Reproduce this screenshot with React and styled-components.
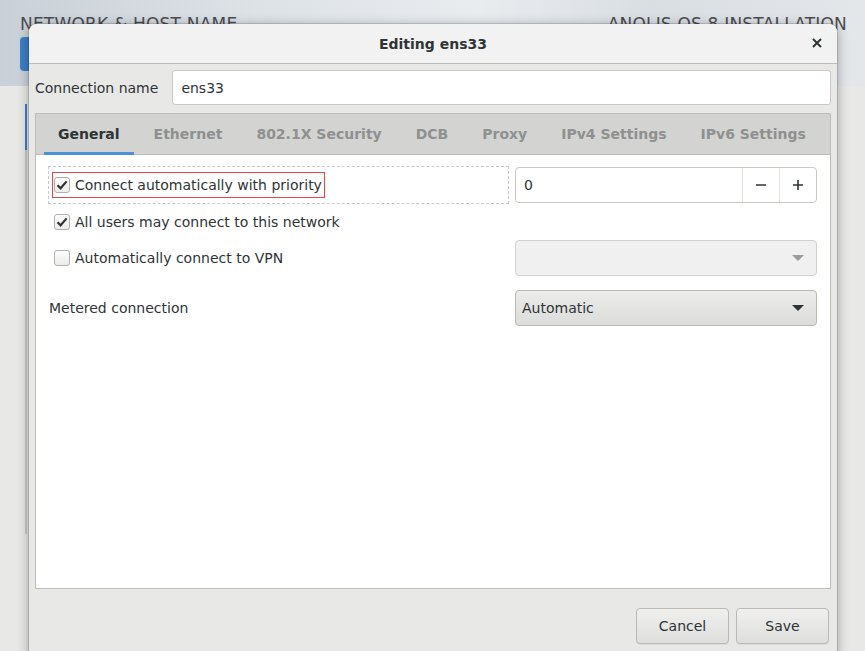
import React from 'react'
import styled, { createGlobalStyle } from 'styled-components'

const GlobalStyle = createGlobalStyle`
  html, body {
    margin: 0;
    padding: 0;
    width: 865px;
    height: 651px;
    overflow: hidden;
    background: #e8e8e7;
    font-family: 'DejaVu Sans', 'Noto Sans', sans-serif;
  }
`

const Screen = styled.div`
  position: relative;
  width: 865px;
  height: 651px;
  overflow: hidden;
  background: #e8e8e7;
`

const Banner = styled.header`
  height: 86px;
  background: linear-gradient(90deg, #c9d0d7 0%, #dde2e7 30%, #e8ecef 55%, #d9dee3 75%, #e3e7ea 100%);
  display: flex;
  justify-content: space-between;
  padding: 14px 18px 0 20px;
  box-sizing: border-box;
  color: #4a4d50;
  font-size: 17px;
  letter-spacing: 0.2px;
`

const BannerText = styled.span`
  line-height: 20px;
`

const BlueButton = styled.div`
  position: absolute;
  left: 20px;
  top: 37px;
  width: 60px;
  height: 34px;
  border-radius: 4px;
  background: #3c80c9;
`

const SideRail = styled.div`
  position: absolute;
  left: 25px;
  top: 104px;
  width: 4px;
  height: 430px;
  border-left: 2px solid #c8c8c6;
  &::before {
    content: '';
    display: block;
    width: 2px;
    height: 46px;
    margin-left: -2px;
    background: #3c80c9;
  }
`

const Dialog = styled.section`
  position: absolute;
  left: 29px;
  top: 24px;
  width: 808px;
  height: 640px;
  background: #e8e8e7;
  border-radius: 8px 8px 0 0;
  box-shadow: 0 2px 12px rgba(0, 0, 0, 0.35), 0 0 0 1px rgba(0, 0, 0, 0.12);
  display: flex;
  flex-direction: column;
  overflow: hidden;
`

const TitleBar = styled.div`
  height: 39px;
  flex: none;
  display: flex;
  align-items: center;
  justify-content: center;
  position: relative;
  background: #f2f2f2;
  border-bottom: 1px solid #bdbdbb;
  font-weight: bold;
  font-size: 14px;
  color: #2e3436;
`

const CloseButton = styled.span`
  position: absolute;
  right: 12px;
  top: 11px;
  width: 16px;
  height: 16px;
  display: flex;
  align-items: center;
  justify-content: center;
`

const Body = styled.div`
  flex: 1;
  display: flex;
  flex-direction: column;
  padding: 6px 6px 0 6px;
  gap: 8px;
`

const NameRow = styled.div`
  display: flex;
  align-items: center;
  gap: 14px;
  height: 35px;
`

const Label = styled.span`
  font-size: 14px;
  color: #2e3436;
  white-space: nowrap;
`

const Entry = styled.div`
  flex: 1;
  height: 100%;
  box-sizing: border-box;
  background: #fff;
  border: 1px solid #cdc7c2;
  border-radius: 3px;
  display: flex;
  align-items: center;
  padding-left: 8px;
  font-size: 14px;
  color: #2e3436;
`

const Notebook = styled.div`
  height: 476px;
  box-sizing: border-box;
  border: 1px solid #c0bdb9;
  display: flex;
  flex-direction: column;
  background: #fff;
`

const TabBar = styled.div`
  height: 40px;
  flex: none;
  display: flex;
  align-items: stretch;
  padding-left: 5px;
  background: #d3d3d2;
  border-bottom: 1px solid #c0bdb9;
`

const Tab = styled.div`
  position: relative;
  display: flex;
  align-items: center;
  padding: 0 17px;
  font-weight: bold;
  font-size: 14px;
  color: ${(p) => (p.$active ? '#2e3436' : '#8f9090')};
  &::after {
    content: '';
    display: ${(p) => (p.$active ? 'block' : 'none')};
    position: absolute;
    left: 3px;
    right: 3px;
    bottom: -1px;
    height: 3px;
    background: #4a90d9;
  }
`

const Page = styled.div`
  display: grid;
  grid-template-columns: 461px 302px;
  grid-template-rows: 38px 36px 36px 50px;
  column-gap: 6px;
  padding: 11px 12px 0 12px;
  & > :nth-child(n + 7) {
    align-self: end;
    height: 36px;
  }
`

const CheckRow = styled.div`
  display: flex;
  align-items: center;
  padding-left: 3px;
  box-sizing: border-box;
  border: ${(p) => (p.$focus ? '1px dashed #c9c9c9' : '1px solid transparent')};
`

const Highlight = styled.span`
  display: flex;
  align-items: center;
  gap: 5px;
  padding: 4px 2px 4px 1px;
  border: 1px solid ${(p) => (p.$on ? '#e0474c' : 'transparent')};
`

const Box = styled.span`
  width: 16px;
  height: 16px;
  box-sizing: border-box;
  border: 1px solid #b1b0ae;
  border-radius: 3px;
  background: linear-gradient(#fdfdfd, #ececeb);
  display: flex;
  align-items: center;
  justify-content: center;
`

const RightCell = styled.div`
  display: flex;
  align-items: center;
`

const Spin = styled.div`
  width: 100%;
  height: 36px;
  box-sizing: border-box;
  border: 1px solid #cdc7c2;
  border-radius: 4px;
  background: #fff;
  display: flex;
`

const SpinValue = styled.div`
  flex: 1;
  display: flex;
  align-items: center;
  padding-left: 8px;
  font-size: 14px;
  color: #2e3436;
`

const SpinButton = styled.div`
  width: 36px;
  border-left: 1px solid #e3e1de;
  display: flex;
  align-items: center;
  justify-content: center;
`

const Combo = styled.div`
  width: 100%;
  height: 36px;
  box-sizing: border-box;
  border: 1px solid ${(p) => (p.$disabled ? '#d3d0cc' : '#bcb8b4')};
  border-radius: 4px;
  background: ${(p) => (p.$disabled ? '#f0f0f0' : 'linear-gradient(#ececeb, #dcdcdb)')};
  display: flex;
  align-items: center;
  justify-content: space-between;
  padding: 0 12px 0 6px;
  font-size: 14px;
  color: #2e3436;
`

const Arrow = styled.span`
  width: 0;
  height: 0;
  border-left: 6px solid transparent;
  border-right: 6px solid transparent;
  border-top: 6px solid ${(p) => (p.$disabled ? '#9a9a9a' : '#2e3436')};
`

const PlainLabel = styled.div`
  display: flex;
  align-items: center;
  padding-left: 1px;
  font-size: 14px;
  color: #2e3436;
`

const Actions = styled.div`
  display: flex;
  justify-content: flex-end;
  gap: 7px;
  padding: 11px 2px 0 0;
`

const Button = styled.button`
  width: 93px;
  height: 36px;
  font-family: inherit;
  font-size: 14px;
  color: #2e3436;
  border: 1px solid #bcb8b4;
  border-radius: 4px;
  background: linear-gradient(#efefee, #dededd);
  box-shadow: 0 1px 0 rgba(0, 0, 0, 0.05);
`

const Check = () => (
  <svg width='12' height='12' viewBox='0 0 12 12'>
    <path d='M1.5 6.2 L4.6 9.3 L10.6 2.4' fill='none' stroke='#2e3436' strokeWidth='2.2' />
  </svg>
)

const CheckBox = ({ checked, children, highlight }) => (
  <Highlight $on={highlight}>
    <Box>{checked && <Check />}</Box>
    <Label>{children}</Label>
  </Highlight>
)

const tabs = ['General', 'Ethernet', '802.1X Security', 'DCB', 'Proxy', 'IPv4 Settings', 'IPv6 Settings']

export default function App() {
  return (
    <Screen>
      <GlobalStyle />
      <Banner>
        <BannerText>NETWORK &amp; HOST NAME</BannerText>
        <BannerText>ANOLIS OS 8 INSTALLATION</BannerText>
      </Banner>
      <BlueButton />
      <SideRail />
      <Dialog>
        <TitleBar>
          Editing ens33
          <CloseButton>
            <svg width='10' height='10' viewBox='0 0 10 10'>
              <path d='M1 1 L9 9 M9 1 L1 9' stroke='#2e3436' strokeWidth='2' />
            </svg>
          </CloseButton>
        </TitleBar>
        <Body>
          <NameRow>
            <Label>Connection name</Label>
            <Entry>ens33</Entry>
          </NameRow>
          <Notebook>
            <TabBar>
              {tabs.map((t, i) => (
                <Tab key={t} $active={i === 0}>
                  {t}
                </Tab>
              ))}
            </TabBar>
            <Page>
              <CheckRow $focus>
                <CheckBox checked highlight>
                  Connect automatically with priority
                </CheckBox>
              </CheckRow>
              <RightCell>
                <Spin>
                  <SpinValue>0</SpinValue>
                  <SpinButton>
                    <svg width='12' height='12' viewBox='0 0 12 12'>
                      <path d='M1 6 H11' stroke='#2e3436' strokeWidth='1.6' />
                    </svg>
                  </SpinButton>
                  <SpinButton>
                    <svg width='12' height='12' viewBox='0 0 12 12'>
                      <path d='M1 6 H11 M6 1 V11' stroke='#2e3436' strokeWidth='1.6' />
                    </svg>
                  </SpinButton>
                </Spin>
              </RightCell>
              <CheckRow>
                <CheckBox checked>All users may connect to this network</CheckBox>
              </CheckRow>
              <div />
              <CheckRow>
                <CheckBox>Automatically connect to VPN</CheckBox>
              </CheckRow>
              <RightCell>
                <Combo $disabled>
                  <span />
                  <Arrow $disabled />
                </Combo>
              </RightCell>
              <PlainLabel>Metered connection</PlainLabel>
              <RightCell>
                <Combo>
                  Automatic
                  <Arrow />
                </Combo>
              </RightCell>
            </Page>
          </Notebook>
          <Actions>
            <Button>Cancel</Button>
            <Button>Save</Button>
          </Actions>
        </Body>
      </Dialog>
    </Screen>
  )
}
